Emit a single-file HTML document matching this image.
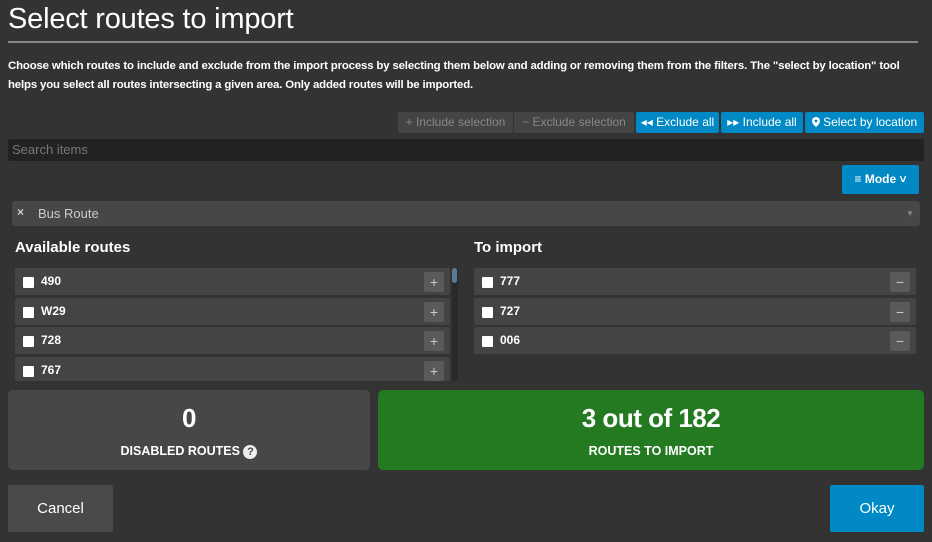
<!DOCTYPE html>
<html><head><style>
*{box-sizing:border-box;margin:0;padding:0}
body{width:932px;height:542px;background:#333;font-family:"Liberation Sans",sans-serif;color:#fff;position:relative;overflow:hidden}
.a{position:absolute}
h1{position:absolute;left:8px;top:3px;font-size:29px;font-weight:normal;letter-spacing:-0.2px}
.hr{left:8px;top:41px;width:910px;height:2px;background:#888}
p{position:absolute;left:8px;top:57px;width:920px;font-size:11.4px;font-weight:bold;line-height:19px;letter-spacing:-0.15px;white-space:nowrap}
.btn{position:absolute;top:112px;height:21px;font-size:12px;line-height:21px;text-align:center;border-radius:2px}
.dis{background:#444;color:#888}
.blue{background:#0089c4;color:#fff}
.search{left:8px;top:139px;width:916px;height:22px;background:#222;border-radius:2px;color:#777;font-size:13px;line-height:22px;padding-left:4px}
.mode{left:842px;top:165px;width:77px;height:29px;background:#0089c4;font-size:12px;font-weight:bold;line-height:29px;text-align:center;border-radius:2px}
.sel{left:12px;top:201px;width:908px;height:25px;background:#474747;border-radius:3px;font-size:13px;color:#ccc;line-height:25px}
.hd{font-size:15px;font-weight:bold;top:239px}
.row{position:absolute;height:27px;background:#444;border-radius:2px;font-size:12px;font-weight:bold;line-height:27px}
.cb{position:absolute;left:8px;top:9px;width:11px;height:11px;background:#fff;border-radius:1px}
.row span{position:absolute;left:26px}
.pb{position:absolute;right:6px;top:4px;width:20px;height:20px;background:#5a5a5a;border-radius:2px;color:#ccc;text-align:center;line-height:20px;font-size:14px;font-weight:normal}
.box{top:390px;height:80px;border-radius:5px;text-align:center}
.big{font-size:26px;font-weight:bold;margin-top:13px;letter-spacing:-0.5px}
.lbl{font-size:12.5px;font-weight:bold;margin-top:10px}
</style></head><body>
<h1>Select routes to import</h1>
<div class="a hr"></div>
<p>Choose which routes to include and exclude from the import process by selecting them below and adding or removing them from the filters. The "select by location" tool<br>helps you select all routes intersecting a given area. Only added routes will be imported.</p>
<div class="btn dis" style="left:398px;width:115px">+ Include selection</div>
<div class="btn dis" style="left:514px;width:120px">− Exclude selection</div>
<div class="btn blue" style="left:636px;width:83px">◂◂ Exclude all</div>
<div class="btn blue" style="left:721px;width:82px">▸▸ Include all</div>
<div class="btn blue" style="left:805px;width:119px"><svg width="8" height="10" viewBox="0 0 8 10" style="vertical-align:-1px"><path d="M4 0a4 4 0 0 0-4 4c0 3 4 6 4 6s4-3 4-6a4 4 0 0 0-4-4z" fill="#fff"/><circle cx="4" cy="4" r="1.4" fill="#0089c4"/></svg> Select by location</div>
<div class="a search">Search items</div>
<div class="a mode">≡ Mode ˅</div>
<div class="a sel"><span style="position:absolute;left:5px;font-weight:bold;font-size:12px;top:-1px">×</span><span style="position:absolute;left:26px">Bus Route</span><span style="position:absolute;right:6px;font-size:8px;color:#888">▼</span></div>
<div class="a hd" style="left:15px">Available routes</div>
<div class="a hd" style="left:474px">To import</div>
<div class="row" style="left:15px;top:268px;width:435px"><div class="cb"></div><span>490</span><div class="pb">+</div></div>
<div class="row" style="left:15px;top:298px;width:435px"><div class="cb"></div><span>W29</span><div class="pb">+</div></div>
<div class="row" style="left:15px;top:327px;width:435px"><div class="cb"></div><span>728</span><div class="pb">+</div></div>
<div class="row" style="left:15px;top:357px;width:435px;height:24px"><div class="cb"></div><span>767</span><div class="pb">+</div></div>
<div class="a" style="left:452px;top:268px;width:6px;height:113px;background:#2a2a2a;border-radius:3px"></div>
<div class="a" style="left:452px;top:268px;width:5px;height:15px;background:#5a7a9a;border-radius:3px"></div>
<div class="row" style="left:474px;top:268px;width:442px"><div class="cb"></div><span>777</span><div class="pb">−</div></div>
<div class="row" style="left:474px;top:298px;width:442px"><div class="cb"></div><span>727</span><div class="pb">−</div></div>
<div class="row" style="left:474px;top:327px;width:442px"><div class="cb"></div><span>006</span><div class="pb">−</div></div>
<div class="a box" style="left:8px;width:362px;background:#474747"><div class="big">0</div><div class="lbl">DISABLED ROUTES <span style="display:inline-block;width:14px;height:14px;border-radius:7px;background:#eee;color:#474747;font-size:11px;line-height:14px">?</span></div></div>
<div class="a box" style="left:378px;width:546px;background:#237a20"><div class="big">3 out of 182</div><div class="lbl">ROUTES TO IMPORT</div></div>
<div class="a" style="left:8px;top:485px;width:105px;height:47px;background:#4a4a4a;border-radius:2px;font-size:15px;text-align:center;line-height:47px">Cancel</div>
<div class="a" style="left:830px;top:485px;width:94px;height:47px;background:#0089c4;border-radius:2px;font-size:15px;text-align:center;line-height:47px">Okay</div>
</body></html>
